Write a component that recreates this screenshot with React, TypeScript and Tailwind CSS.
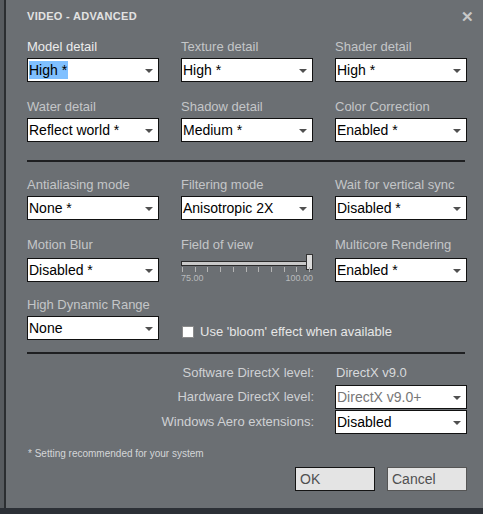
import React from 'react';

const font = { fontFamily: '"Liberation Sans", Arial, sans-serif' };

const Arrow = () => (
  <svg width="8" height="5" viewBox="0 0 8 5" className="absolute right-[5px] top-[10px]">
    <path d="M0 0H8L4 4Z" fill="#505050" />
  </svg>
);

interface SelectProps {
  value: string;
  selected?: boolean;
  disabled?: boolean;
}

const Select = ({ value, selected, disabled }: SelectProps) => (
  <div className="relative h-[24px] w-[132px] border border-[#111] bg-white">
    <span
      className={`absolute left-[1px] top-[2px] h-[18px] pr-[1px] text-[14px] leading-[18px] ${
        selected ? 'bg-[#80c0ff] text-black' : disabled ? 'text-[#777]' : 'text-black'
      }`}
    >
      {value}
    </span>
    <Arrow />
  </div>
);

const Field = ({ label, value, selected, bright, gap = 'mt-[3px]' }: { label: string; value: string; selected?: boolean; bright?: boolean; gap?: string }) => (
  <div className="flex flex-col">
    <div className={`h-[16px] text-[13px] leading-[16px] ${bright ? 'text-[#ececec]' : 'text-[#c4c6c8]'}`}>{label}</div>
    <div className={gap}>
      <Select value={value} selected={selected} />
    </div>
  </div>
);

const Slider = () => {
  const ticks = Array.from({ length: 11 }, (_, i) => i);
  return (
    <div className="flex flex-col">
      <div className="h-[16px] text-[13px] leading-[16px] text-[#c4c6c8]">Field of view</div>
      <div className="relative mt-[5px] h-[24px] w-[132px]">
        <div className="absolute left-0 top-[3px] h-[5px] w-[128px] border border-[#2a2a2a] bg-[#c8c8c8]" />
        <div className="absolute left-[125px] top-[-4px] h-[16px] w-[7px] border border-[#333] bg-[#dcdcdc]" />
        {ticks.map((i) => (
          <div key={i} className="absolute top-[9px] h-[5px] w-px bg-[#b4b4b4]" style={{ left: 1 + i * 12.7 }} />
        ))}
        <div className="absolute left-0 top-[15px] text-[9px] leading-[10px] text-[#b8babc]">75.00</div>
        <div className="absolute right-0 top-[15px] text-[9px] leading-[10px] text-[#b8babc]">100.00</div>
      </div>
    </div>
  );
};

const Divider = () => <div className="h-[2px] w-[438px] bg-[#1e1f21]" />;

export default function App() {
  return (
    <div className="flex h-[514px] w-[483px] flex-col overflow-hidden bg-[#2a2e33]" style={font}>
      <div className="flex h-[508px]">
        <div className="w-[4px] bg-[#575b5f]" />
        <div className="w-[2px] bg-[#2b2e31]" />
        <div className="relative flex-1 bg-[#6b6f73] pl-[21px] pt-[8px]">
          <div className="text-[11px] font-bold leading-[16px] tracking-[0.3px] text-[#e2e2e2]">VIDEO - ADVANCED</div>
          <div className="absolute right-[9px] top-[9px] text-[15px] font-bold leading-[16px] text-[#c8c8c8]">✕</div>

          <div className="mt-[15px] grid w-[440px] grid-cols-[132px_132px_132px] gap-x-[22px] gap-y-[17px]">
            <Field label="Model detail" value="High *" selected bright />
            <Field label="Texture detail" value="High *" />
            <Field label="Shader detail" value="High *" />
            <Field label="Water detail" value="Reflect world *" />
            <Field label="Shadow detail" value="Medium *" />
            <Field label="Color Correction" value="Enabled *" />
          </div>

          <div className="mt-[18px]">
            <Divider />
          </div>

          <div className="mt-[15px] grid w-[440px] grid-cols-[132px_132px_132px] gap-x-[22px]">
            <Field label="Antialiasing mode" value="None *" />
            <Field label="Filtering mode" value="Anisotropic 2X" />
            <Field label="Wait for vertical sync" value="Disabled *" />
          </div>

          <div className="mt-[17px] grid w-[440px] grid-cols-[132px_132px_132px] gap-x-[22px]">
            <Field label="Motion Blur" value="Disabled *" gap="mt-[5px]" />
            <Slider />
            <Field label="Multicore Rendering" value="Enabled *" gap="mt-[5px]" />
          </div>

          <div className="mt-[15px] flex">
            <Field label="High Dynamic Range" value="None" />
            <div className="ml-[23px] mt-[26px] flex items-center">
              <div className="h-[12px] w-[12px] border border-[#8a8a8a] bg-white" />
              <span className="ml-[6px] text-[13px] leading-[16px] text-[#e6e6e6]">Use 'bloom' effect when available</span>
            </div>
          </div>

          <div className="mt-[12px]">
            <Divider />
          </div>

          <div className="mt-[9px] flex flex-col text-[13px] leading-[16px] text-[#cfd1d3]">
            <div className="flex h-[20px] items-center">
              <span className="w-[287px] text-right">Software DirectX level:</span>
              <span className="ml-[22px] text-[#d8dadc]">DirectX v9.0</span>
            </div>
            <div className="mt-[2px] flex items-center">
              <span className="w-[287px] text-right">Hardware DirectX level:</span>
              <div className="ml-[21px]">
                <Select value="DirectX v9.0+" disabled />
              </div>
            </div>
            <div className="mt-[1px] flex items-center">
              <span className="w-[287px] text-right">Windows Aero extensions:</span>
              <div className="ml-[21px]">
                <Select value="Disabled" />
              </div>
            </div>
          </div>

          <div className="ml-[1px] mt-[14px] text-[10px] leading-[12px] text-[#d4d6d8]">* Setting recommended for your system</div>

          <div className="mt-[7px] flex pl-[268px]">
            <div className="flex h-[24px] w-[80px] items-center border-[1.5px] border-[#141414] bg-[#e4e4e4] pl-[4px] text-[14px] text-[#505050]">OK</div>
            <div className="ml-[12px] flex h-[24px] w-[80px] items-center border border-[#555] bg-[#e4e4e4] pl-[4px] text-[14px] text-[#505050]">Cancel</div>
          </div>
        </div>
      </div>
      <div className="flex-1 bg-[#2c3036]" />
    </div>
  );
}
